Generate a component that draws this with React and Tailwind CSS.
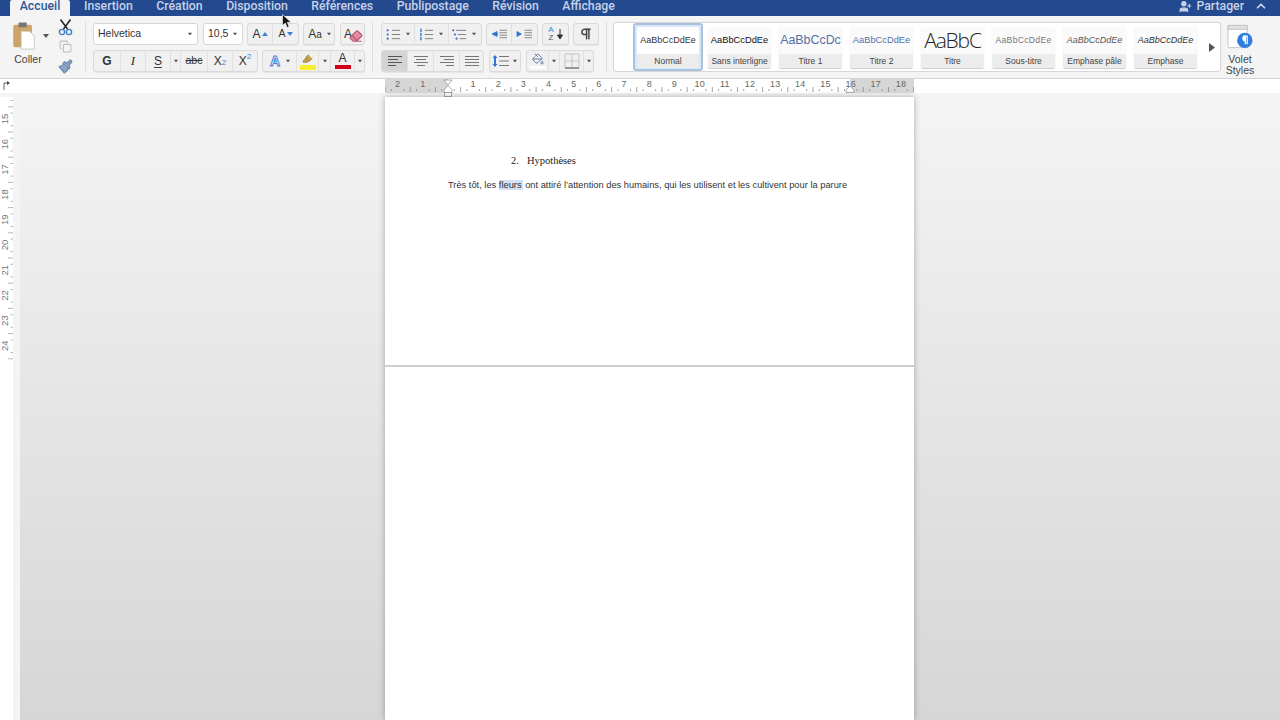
import { ChevronUp, Copy, Eraser, Highlighter, PaintBucket, Paintbrush, Pilcrow, UserPlus } from 'lucide-react'

const tabs = ['Insertion', 'Création', 'Disposition', 'Références', 'Publipostage', 'Révision', 'Affichage']
const CM = 25.17

const Caret = ({ className = '' }) => (
  <svg width="6" height="4" viewBox="0 0 6 4" className={`shrink-0 ${className}`}><path d="M0 0h6L3 4z" fill="#555" /></svg>
)

const Group = ({ className = '', children }) => (
  <div className={`flex h-[22px] items-stretch overflow-hidden rounded-[3px] border border-[#dadada] bg-[#f0f0f0] shadow-[0_1px_0_#e6e6e6] ${className}`}>{children}</div>
)

const Cell = ({ className = '', children }) => (
  <div className={`flex items-center justify-center border-r border-[#e0e0e0] last:border-r-0 ${className}`}>{children}</div>
)

const Lines = ({ rows, stroke = '#777' }) => (
  <svg width="16" height="12" viewBox="0 0 16 12" fill="none" stroke={stroke} strokeWidth="1">
    {rows.map(([x1, x2], i) => <path key={i} d={`M${x1} ${1.5 + i * 3}H${x2}`} />)}
  </svg>
)

const ListIcon = ({ numbered, multi }) => (
  <svg width="15" height="13" viewBox="0 0 18 14">
    {[2, 7, 12].map((y, i) => (
      <g key={y}>
        {numbered
          ? <rect x="1.5" y={y - 2} width="1.6" height="4" fill="#2f6fc4" />
          : <circle cx={multi ? 1.5 + i * 2 : 2} cy={y} r="1.3" fill="#2f6fc4" />}
        <path d={`M${multi ? 5 + i * 2 : 7} ${y}H17`} stroke="#777" strokeWidth="1.1" />
      </g>
    ))}
  </svg>
)

const IndentIcon = ({ flip }) => (
  <svg width="17" height="10" viewBox="0 0 20 12">
    <path d={flip ? 'M1 3l5 3-5 3z' : 'M7 3L1 6l6 3z'} fill="#2f78d0" stroke="#2f78d0" />
    <rect x={flip ? 3 : 5} y="5" width="3" height="2" fill="#2f78d0" />
    <path d="M10 1.5h9M10 4.5h9M10 7.5h9M10 10.5h9" stroke="#777" />
  </svg>
)

const StyleCard = ({ label, children }) => (
  <div className="mt-[1px] flex h-[41px] w-[63px] shrink-0 flex-col overflow-hidden rounded-[2px] bg-[#fafafa] shadow-[0_1px_1px_rgba(0,0,0,0.2)]">
    <div className="flex h-[27px] items-center justify-center whitespace-nowrap">{children}</div>
    <div className="flex h-[14px] items-center justify-center bg-[#ececec] text-[8.500px] text-[#444]">{label}</div>
  </div>
)

function HRuler() {
  const ticks = []
  for (let i = -10; i <= 74; i++) {
    const x = 63 + (i * CM) / 4
    if (x < 0 || x > 529 || i % 4 === 0) continue
    ticks.push(<path key={i} d={i % 2 === 0 ? `M${x} 8V13` : `M${x} 10V12`} stroke="#8a8a8a" strokeWidth="0.8" />)
  }
  const nums = [-2, -1, ...Array.from({ length: 18 }, (_, i) => i + 1)]
  return (
    <svg width="529" height="18" viewBox="0 0 529 18" className="block shrink-0">
      <rect x="0" y="0" width="63" height="14" fill="#d6d6d6" />
      <rect x="465" y="0" width="64" height="14" fill="#d6d6d6" />
      {ticks}
      {nums.map(n => (
        <text key={n} x={63 + n * CM} y="8" textAnchor="middle" fontSize="9" letterSpacing="0.3" fill="#666" fontFamily="Liberation Sans, sans-serif">{Math.abs(n)}</text>
      ))}
      <path d="M59 1h8l-4 5zM59 13.500v-2.500l4-4.500 4 4.500v2.500z" fill="#fff" stroke="#888" strokeWidth="0.7" />
      <rect x="59.500" y="13.500" width="7" height="4" fill="#fff" stroke="#888" strokeWidth="0.7" />
      <path d="M461 13.500v-2.500l4-4 4 4v2.500z" fill="#fff" stroke="#888" strokeWidth="0.7" />
    </svg>
  )
}

function VRuler() {
  const ticks = []
  for (let i = 0; i < 42; i++) {
    const y = 3.5 + (i * 25.2) / 4
    if (i % 4 === 3) continue
    ticks.push(<path key={i} d={i % 4 === 1 ? `M8 ${y}H13` : `M10.500 ${y}H13`} stroke="#999" strokeWidth="0.7" />)
  }
  const nums = [15, 16, 17, 18, 19, 20, 21, 22, 23, 24]
  return (
    <svg width="13" height="270" viewBox="0 0 13 270" className="block">
      {ticks}
      {nums.map((n, i) => {
        const y = 22 + i * 25.2
        return <text key={n} x="5" y={y} transform={`rotate(-90 5 ${y})`} textAnchor="middle" dominantBaseline="middle" fontSize="9.500" fill="#777" fontFamily="Liberation Sans, sans-serif">{n}</text>
      })}
    </svg>
  )
}

export default function App() {
  return (
    <div className="relative flex h-[720px] w-[1280px] flex-col overflow-hidden bg-white font-['Liberation_Sans',sans-serif] text-[#333]">
      {/* title tabs */}
      <div className="flex h-[16px] shrink-0 items-start bg-[#23498f] pr-[10px] pl-[10px] font-['Roboto',sans-serif] text-[12.250px] leading-[12px] font-medium text-[#c6d3e8]">
        <div className="flex h-full w-[60px] justify-center rounded-t-[2px] bg-[#f4f4f4] text-[#2b579a]">Accueil</div>
        <div className="ml-[14px] flex gap-[23.500px]">
          {tabs.map(t => <span key={t}>{t}</span>)}
        </div>
        <div className="ml-auto flex items-start">
          <UserPlus className="h-[13px] w-[15px] fill-[#c6d3e8]" />
          <span className="ml-[3px]">Partager</span>
          <ChevronUp className="-mt-[1px] ml-[10px] mr-[2px] h-[14px] w-[14px]" strokeWidth={3} />
        </div>
      </div>

      {/* ribbon */}
      <div className="flex h-[63px] shrink-0 border-b border-[#d4d4d4] bg-[#f4f4f4]">
        {/* clipboard */}
        <div className="ml-[12px] flex w-[42px] flex-col">
          <div className="mt-[6px] flex items-center">
            <svg width="24" height="28" viewBox="0 0 24 30">
              <rect x="0.500" y="3" width="20" height="24" rx="2" fill="#cda468" />
              <rect x="6" y="0.500" width="9" height="5" rx="1" fill="#777" />
              <path d="M9 10h9l5 5v14H9z" fill="#fff" stroke="#c9c9c9" />
            </svg>
            <Caret className="ml-[7px]" />
          </div>
          <span className="mt-[2px] w-[32px] text-center text-[10.500px] text-[#444]">Coller</span>
        </div>
        <div className="flex w-[22px] flex-col items-center pt-[3px]">
          <svg width="15" height="17" viewBox="0 0 15 17" fill="none">
            <path d="M2.500 0.500L9.500 10M12.500 0.500L5.500 10" stroke="#222" strokeWidth="1.500" />
            <circle cx="4" cy="13" r="2.600" stroke="#3f7fc8" strokeWidth="1.400" />
            <circle cx="11" cy="13" r="2.600" stroke="#3f7fc8" strokeWidth="1.400" />
          </svg>
          <Copy className="mt-[4px] h-[13px] w-[13px] text-[#bdbdbd]" />
          <Paintbrush className="mt-[6px] h-[15px] w-[15px] fill-[#8aa5c8] text-[#6d88ad]" />
        </div>
        <div className="my-[6px] ml-[9px] w-px bg-[#dedede]" />

        {/* font */}
        <div className="ml-[7px] flex w-[272px] flex-col gap-[5px] pt-[7px]">
          <div className="flex items-center">
            <div className="flex h-[22px] w-[105px] items-center justify-between rounded-[3px] border border-[#d6d6d6] bg-white px-[4px] text-[10.500px] text-[#333]">Helvetica<Caret className="scale-75" /></div>
            <div className="ml-[5px] flex h-[22px] w-[40px] items-center justify-between rounded-[3px] border border-[#d6d6d6] bg-white px-[4px] text-[10.500px]">10,5<Caret className="scale-75" /></div>
            <Group className="ml-[4px] w-[52px]">
              <Cell className="w-[26px] gap-[1px] text-[12px]">A<svg width="6" height="4"><path d="M0 4h6L3 0z" fill="#3b82d8" /></svg></Cell>
              <Cell className="w-[26px] gap-[1px] text-[10.500px]">A<svg width="6" height="4"><path d="M0 0h6L3 4z" fill="#3b82d8" /></svg></Cell>
            </Group>
            <Group className="ml-[4px] w-[32px]">
              <Cell className="w-full gap-[4px] pl-[2px] text-[12px]"><span>A<span className="text-[10px]">a</span></span><Caret className="scale-75" /></Cell>
            </Group>
            <Group className="ml-[5px] w-[25px]">
              <Cell className="relative w-full text-[12px]"><span className="absolute top-[1px] left-[3px]">A</span><Eraser className="absolute right-[1px] bottom-[1px] h-[14px] w-[14px] fill-[#e38ba3] text-[#b9566f]" /></Cell>
            </Group>
          </div>
          <div className="flex items-center">
            <Group className="w-[165px] text-[12px]">
              <Cell className="w-[27px] font-bold">G</Cell>
              <Cell className="w-[25px] font-['Liberation_Serif',serif] text-[13px] italic">I</Cell>
              <Cell className="w-[25px]"><span className="border-b border-[#444] leading-[12px]">S</span></Cell>
              <Cell className="w-[10px]"><Caret className="scale-75" /></Cell>
              <Cell className="w-[27px] text-[10.500px] line-through">abc</Cell>
              <Cell className="w-[25px]">X<sub className="text-[8px] text-[#3b82d8]">2</sub></Cell>
              <Cell className="flex-1">X<sup className="text-[8px] text-[#3b82d8]">2</sup></Cell>
            </Group>
            <Group className="ml-[4px] w-[103px]">
              <Cell className="w-[34px] gap-[5px] pl-[2px]"><span className="text-[14px] font-bold text-white [-webkit-text-stroke:1px_#3f86dc]">A</span><Caret className="scale-75" /></Cell>
              <Cell className="w-[22px]"><div className="flex flex-col items-center"><Highlighter className="h-[11px] w-[11px] fill-[#c9a545] text-[#8b7a3b]" /><div className="mt-[1px] h-[5px] w-[16px] bg-[#f5ee2a]" /></div></Cell>
              <Cell className="w-[12px]"><Caret className="scale-75" /></Cell>
              <Cell className="w-[24px]"><div className="flex flex-col items-center text-[12px] leading-[11px]">A<div className="mt-[1px] h-[4px] w-[16px] bg-[#d0021b]" /></div></Cell>
              <Cell className="flex-1"><Caret className="scale-75" /></Cell>
            </Group>
          </div>
        </div>
        <div className="my-[6px] ml-[7px] w-px bg-[#dedede]" />

        {/* paragraph */}
        <div className="ml-[8px] flex w-[218px] flex-col gap-[5px] pt-[7px]">
          <div className="flex items-center">
            <Group className="w-[101px]">
              {[{}, { numbered: true }, { multi: true }].map((p, i) => (
                <Cell key={i} className="flex-1 gap-[4px]"><ListIcon {...p} /><Caret className="scale-75" /></Cell>
              ))}
            </Group>
            <Group className="ml-[4px] w-[52px]">
              <Cell className="w-[26px]"><IndentIcon /></Cell>
              <Cell className="w-[26px]"><IndentIcon flip /></Cell>
            </Group>
            <Group className="ml-[4px] w-[27px]">
              <Cell className="w-full gap-[3px] text-[8px] leading-[8px]"><span className="text-center text-[#3b82d8]">A<br /><span className="text-[#555]">Z</span></span><svg width="6" height="12" viewBox="0 0 6 12"><path d="M3 1v8M0.500 7L3 11l2.500-4z" stroke="#333" fill="#333" /></svg></Cell>
            </Group>
            <Group className="ml-[4px] w-[26px]">
              <Cell className="w-full"><Pilcrow className="h-[14px] w-[14px] text-[#444]" strokeWidth={2.500} /></Cell>
            </Group>
          </div>
          <div className="flex items-center">
            <Group className="w-[103px]">
              <Cell className="w-[26px] bg-[#d4d4d4]"><Lines rows={[[1, 15], [1, 11], [1, 15], [1, 9]]} stroke="#555" /></Cell>
              <Cell className="w-[26px]"><Lines rows={[[1, 15], [3, 13], [1, 15], [4, 12]]} /></Cell>
              <Cell className="w-[26px]"><Lines rows={[[1, 15], [5, 15], [1, 15], [7, 15]]} /></Cell>
              <Cell className="flex-1"><Lines rows={[[1, 15], [1, 15], [1, 15], [1, 15]]} /></Cell>
            </Group>
            <Group className="ml-[5px] w-[32px]">
              <Cell className="w-full gap-[2px]">
                <svg width="18" height="14" viewBox="0 0 18 14"><path d="M3 1l2.500 3h-5zM3 13l2.500-3h-5z" fill="#2f78d0" /><rect x="2" y="4" width="2" height="6" fill="#2f78d0" /><path d="M7 2.500h10M7 7h10M7 11.500h10" stroke="#777" /></svg>
                <Caret className="scale-75" />
              </Cell>
            </Group>
            <Group className="ml-[5px] w-[68px]">
              <Cell className="w-[22px]"><div className="flex flex-col items-center"><PaintBucket className="h-[12px] w-[12px] text-[#5d7da8]" /><div className="mt-[1px] h-[3px] w-[16px] bg-white" /></div></Cell>
              <Cell className="w-[11px]"><Caret className="scale-75" /></Cell>
              <Cell className="w-[24px]">
                <svg width="16" height="16" viewBox="0 0 16 16" fill="none"><path d="M1 1h14v14H1zM8 1v14M1 8h14" stroke="#c4c4c4" /><path d="M1 15h14" stroke="#555" /></svg>
              </Cell>
              <Cell className="flex-1"><Caret className="scale-75" /></Cell>
            </Group>
          </div>
        </div>
        <div className="my-[6px] ml-[7px] w-px bg-[#dedede]" />

        {/* styles gallery */}
        <div className="mt-[6px] ml-[6px] flex h-[50px] w-[608px] items-center rounded-[3px] border border-[#d6d6d6] bg-white pl-[19px]">
          <div className="flex h-[48px] w-[70px] shrink-0 items-center justify-center rounded-[3px] border-2 border-[#a9c2e0] bg-[#d9e6f5]">
            <div className="mt-[1px] flex h-[41px] w-[62px] flex-col overflow-hidden rounded-[1px] bg-white">
              <div className="flex h-[27px] items-center justify-center whitespace-nowrap text-[9px] text-[#333]">AaBbCcDdEe</div>
              <div className="flex h-[14px] items-center justify-center bg-[#ececec] text-[8.500px] text-[#444]">Normal</div>
            </div>
          </div>
          <div className="ml-[5px] flex gap-[8px]">
            <StyleCard label="Sans interligne"><span className="text-[9.300px] text-[#111]">AaBbCcDdEe</span></StyleCard>
            <StyleCard label="Titre 1"><span className="text-[12.400px] text-[#5470a8]">AaBbCcDc</span></StyleCard>
            <StyleCard label="Titre 2"><span className="text-[9.300px] text-[#5470a8]">AaBbCcDdEe</span></StyleCard>
            <StyleCard label="Titre"><span className="font-['Open_Sans',sans-serif] text-[21px] font-light tracking-[-1.200px] text-[#222]">AaBbC</span></StyleCard>
            <StyleCard label="Sous-titre"><span className="text-[8.600px] tracking-[0.300px] text-[#777]">AaBbCcDdEe</span></StyleCard>
            <StyleCard label="Emphase pâle"><span className="text-[9px] text-[#555] italic">AaBbCcDdEe</span></StyleCard>
            <StyleCard label="Emphase"><span className="text-[9px] text-[#333] italic">AaBbCcDdEe</span></StyleCard>
          </div>
          <svg width="6" height="9" viewBox="0 0 6 9" className="ml-[12px]"><path d="M0 0l6 4.500L0 9z" fill="#555" /></svg>
        </div>

        {/* volet */}
        <div className="ml-[5px] flex w-[28px] flex-col items-center pt-[8px]">
          <svg width="28" height="27" viewBox="0 0 28 28">
            <rect x="1.500" y="1.500" width="20" height="23" rx="1" fill="#fff" stroke="#c4c4c4" />
            <rect x="1.500" y="1.500" width="20" height="4" fill="#e0e0e0" stroke="#c4c4c4" />
            <circle cx="19" cy="17" r="8" fill="#2f7fe0" />
            <path d="M17 12.500h5M19.500 12.500V21M21.500 12.500V21M19.500 12.500a2.500 2.500 0 0 0 0 5" stroke="#fff" strokeWidth="1.300" fill="#fff" />
          </svg>
          <span className="mt-[3px] text-center text-[10.500px] leading-[11px] whitespace-nowrap text-[#444]">Volet<br />Styles</span>
        </div>
      </div>

      {/* ruler row */}
      <div className="flex h-[18px] shrink-0 bg-[linear-gradient(#ffffff_0,#ffffff_14px,#f4f4f4_14px,#f4f4f4_18px)]">
        <div className="w-[13px] pt-[2px] pl-[3px]">
          <svg width="8" height="9" viewBox="0 0 8 9"><path d="M1 9V2h3" stroke="#666" fill="none" /><path d="M4 0l3 2-3 2z" fill="#444" /></svg>
        </div>
        <div className="w-[372px]" />
        <HRuler />
      </div>

      {/* document */}
      <div className="flex min-h-0 flex-1 bg-[linear-gradient(#f4f4f4,#d6d6d6)]">
        <div className="w-[13px] shrink-0 bg-white"><VRuler /></div>
        <div className="w-[7px] shrink-0 bg-[#f4f4f4]" />
        <div className="w-[365px] shrink-0" />
        <div className="w-[529px] shrink-0 bg-white shadow-[0_0_6px_rgba(0,0,0,0.3)]">
          <div className="h-[268px]">
            <div className="flex pt-[57px] pl-[126px] font-['Liberation_Serif',serif] text-[10.500px] leading-[14px] text-[#222]">
              <span>2.</span><span className="ml-[8px]">Hypothèses</span>
            </div>
            <p className="mt-[10px] pl-[63px] text-[9.300px] leading-[14px] whitespace-nowrap text-[#333]">
              Très tôt, les <span className="bg-[#d3e1f6] pr-[1px]">fleurs</span> ont attiré l’attention des humains, qui les utilisent et les cultivent pour la parure
            </p>
          </div>
          <div className="h-[2px] bg-[#cfcfcf]" />
        </div>
      </div>

      {/* mouse pointer */}
      <svg width="10" height="15" viewBox="0 0 10 15" className="absolute top-[14px] left-[282px]">
        <path d="M0.500 0.500v11l2.800-2.500 1.800 4.500 2-.8-1.800-4.400h3.700z" fill="#111" stroke="#fff" strokeWidth="0.600" />
      </svg>
    </div>
  )
}
